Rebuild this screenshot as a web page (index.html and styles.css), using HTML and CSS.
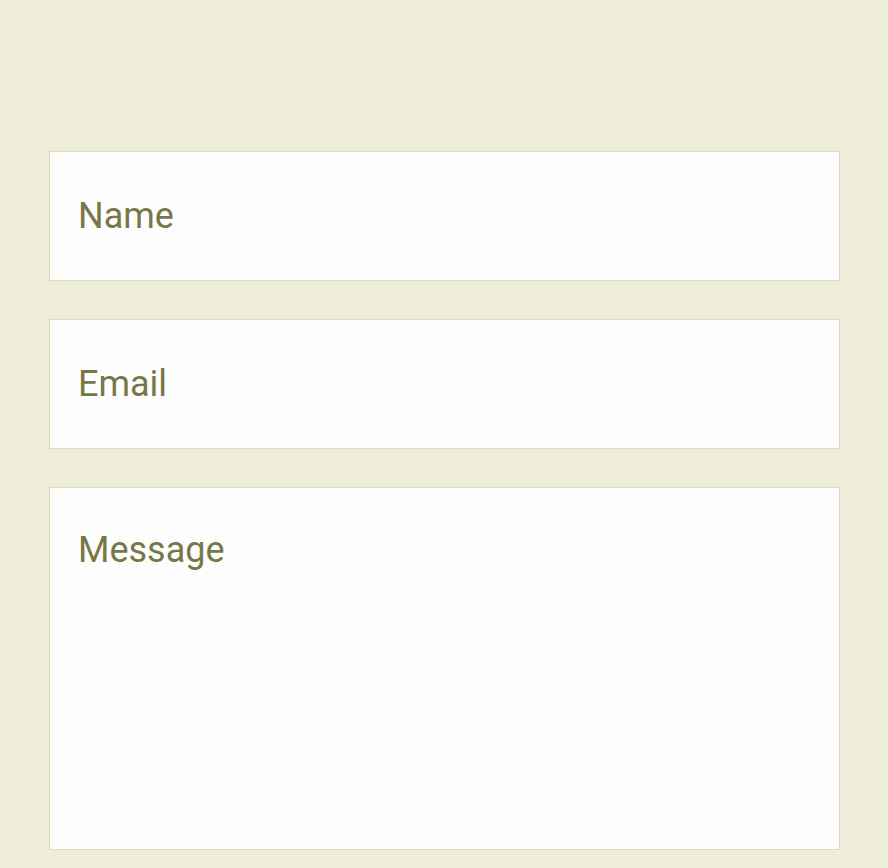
FILE: index.html
```html
<!DOCTYPE html>
<html lang="en">
<head>
    <meta charset="UTF-8">
    <meta name="viewport" content="width=device-width, initial-scale=1.0">
    <title>Contact</title>
    <link rel="stylesheet" href="styles.css">
</head>
<body>
    <main>
        <form class="contact-form" name="contact" method="POST">
            <input type="text" name="name" placeholder="Name">
            <input type="email" name="email" placeholder="Email">
            <textarea name="message" placeholder="Message"></textarea>
        </form>
    </main>
</body>
</html>
```

FILE: styles.css
```css
/* Contact form page */
body {
    margin: 0;
    padding: 0;
    background-color: #efeedb;
    font-family: Roboto, "Noto Sans", sans-serif;
}

main {
    padding: 151px 48px 0 49px;
}

.contact-form {
    display: flex;
    flex-direction: column;
    gap: 38px;
}

.contact-form input,
.contact-form textarea {
    box-sizing: border-box;
    width: 100%;
    margin: 0;
    border: 1px solid #e2dcb2;
    border-radius: 0;
    background-color: #fdfdfe;
    color: #5f5d30;
    font-family: inherit;
    font-size: 36px;
    outline: none;
}

.contact-form input {
    height: 130px;
    padding: 0 28px;
}

.contact-form textarea {
    height: 363px;
    padding: 41px 28px 20px;
    resize: none;
}

.contact-form input::placeholder,
.contact-form textarea::placeholder {
    color: #787747;
    opacity: 1;
}
```
